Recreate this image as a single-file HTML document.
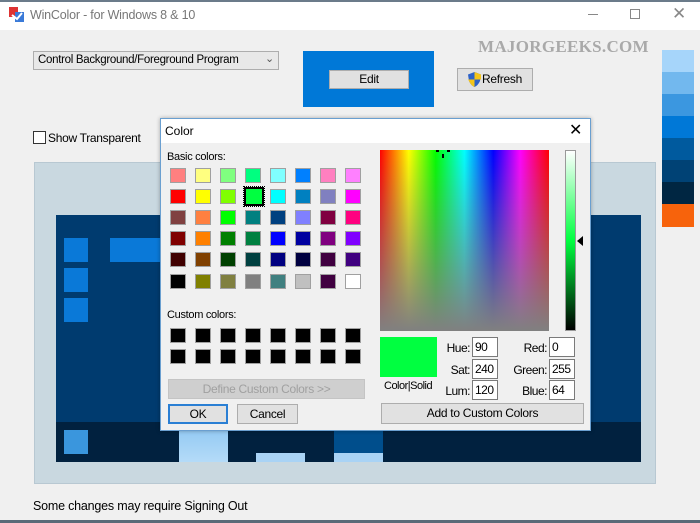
<!DOCTYPE html>
<html><head><meta charset="utf-8"><style>
*{margin:0;padding:0;box-sizing:border-box}
body{width:700px;height:523px;overflow:hidden;background:#f0f0f0;font-family:"Liberation Sans",sans-serif;font-size:12px;color:#000;position:relative}
.a{position:absolute}
.sw{position:absolute;width:16px;height:15px;border:1px solid #a0a0a0}
.inp{position:absolute;background:#fff;border:1px solid #7a7a7a;width:26px;height:20px;font-size:12px;padding:2px 2px;letter-spacing:-0.5px}
.lbl{position:absolute;font-size:12px;text-align:right;letter-spacing:-0.5px}
.btn{position:absolute;background:#e1e1e1;border:1px solid #adadad;text-align:center;font-size:12px;letter-spacing:-0.3px}
</style></head><body>
<div class="a" style="left:0;top:0;width:700px;height:2px;background:#6b7b8a"></div>
<div class="a" style="left:0;top:2px;width:700px;height:28px;background:#fff"></div>
<svg class="a" style="left:9px;top:7px" width="16" height="16"><rect x="0" y="0" width="9" height="10" fill="#d33"/><rect x="6" y="5" width="9" height="10" fill="#3a7ad8"/><path d="M3 8 L8 12 L13 6" stroke="#fff" stroke-width="2" fill="none"/></svg>
<div class="a" style="left:30px;top:8px;font-size:12.5px;color:#777;letter-spacing:-0.2px">WinColor - for Windows 8 &amp; 10</div>
<div class="a" style="left:588px;top:14px;width:10px;height:1px;background:#888"></div>
<div class="a" style="left:630px;top:9px;width:10px;height:10px;border:1px solid #888"></div>
<div class="a" style="left:672px;top:4px;font-size:17px;color:#888">✕</div>

<div class="a" style="left:33px;top:51px;width:246px;height:19px;border:1px solid #adadad;background:#e8e8e8;padding:2px 4px;font-size:11.5px;letter-spacing:-0.3px">Control Background/Foreground Program</div>
<div class="a" style="left:265px;top:52px;font-size:11px;color:#555">⌄</div>
<div class="a" style="left:303px;top:51px;width:131px;height:56px;background:#0078d7"></div>
<div class="btn" style="left:329px;top:70px;width:80px;height:19px;line-height:17px">Edit</div>
<div class="btn" style="left:457px;top:68px;width:76px;height:23px;line-height:21px;padding-left:14px">Refresh</div>
<svg class="a" style="left:467px;top:71px" width="15" height="17"><path d="M7.5 1 L14 3.5 L13 10 Q11 14.5 7.5 16 Q4 14.5 2 10 L1 3.5 Z" fill="#2d62c8"/><path d="M7.5 1 L14 3.5 L14 8.5 L7.5 8.5 Z" fill="#f5c518"/><path d="M1 8.5 L7.5 8.5 L7.5 16 Q4 14.5 2 10 Z" fill="#f5c518"/></svg>
<div class="a" style="left:478px;top:37px;font-family:'Liberation Serif',serif;font-weight:bold;font-size:17px;color:#a9a9a9;letter-spacing:0.3px">MAJORGEEKS.COM</div>

<div class="a" style="left:662px;top:50px;width:32px;height:22px;background:#a6d5fa"></div>
<div class="a" style="left:662px;top:72px;width:32px;height:22px;background:#72b8ee"></div>
<div class="a" style="left:662px;top:94px;width:32px;height:22px;background:#3b97e0"></div>
<div class="a" style="left:662px;top:116px;width:32px;height:22px;background:#0078d7"></div>
<div class="a" style="left:662px;top:138px;width:32px;height:22px;background:#005a9e"></div>
<div class="a" style="left:662px;top:160px;width:32px;height:22px;background:#004275"></div>
<div class="a" style="left:662px;top:182px;width:32px;height:22px;background:#002642"></div>
<div class="a" style="left:662px;top:204px;width:32px;height:23px;background:#f7630c"></div>

<div class="a" style="left:33px;top:131px;width:13px;height:13px;border:1px solid #333;background:#fff"></div>
<div class="a" style="left:48px;top:131px;font-size:12px;letter-spacing:-0.3px">Show Transparent</div>

<div class="a" style="left:34px;top:162px;width:622px;height:322px;background:#c9d8e0;border:1px solid #b8c8d2"></div>
<div class="a" style="left:56px;top:215px;width:585px;height:207px;background:#003b6f"></div>
<div class="a" style="left:64px;top:238px;width:24px;height:24px;background:#0a79d8"></div>
<div class="a" style="left:64px;top:268px;width:24px;height:24px;background:#0a79d8"></div>
<div class="a" style="left:64px;top:298px;width:24px;height:24px;background:#0a79d8"></div>
<div class="a" style="left:110px;top:238px;width:60px;height:24px;background:#0a79d8"></div>
<div class="a" style="left:56px;top:422px;width:585px;height:40px;background:#01213f"></div>
<div class="a" style="left:64px;top:430px;width:24px;height:24px;background:#3a96dd"></div>
<div class="a" style="left:179px;top:422px;width:49px;height:40px;background:linear-gradient(#8cc6f2,#b4dbf8)"></div>
<div class="a" style="left:256px;top:453px;width:49px;height:9px;background:#a9d3f5"></div>
<div class="a" style="left:334px;top:422px;width:49px;height:31px;background:#004e8c"></div>
<div class="a" style="left:334px;top:453px;width:49px;height:9px;background:#a9d3f5"></div>

<div class="a" style="left:33px;top:499px;font-size:12.5px;letter-spacing:-0.2px">Some changes may require Signing Out</div>
<div class="a" style="left:0;top:520px;width:700px;height:3px;background:#5a6a78"></div>

<!-- dialog -->
<div class="a" style="left:160px;top:118px;width:431px;height:313px;background:#f0f0f0;border:1px solid #6a9fd0;box-shadow:0 0 4px rgba(0,0,0,.3)"></div>
<div class="a" style="left:161px;top:119px;width:429px;height:24px;background:#fff"></div>
<div class="a" style="left:165px;top:124px;font-size:12px">Color</div>
<div class="a" style="left:569px;top:120px;font-size:16px">✕</div>
<div class="a" style="left:167px;top:151px;font-size:11px;letter-spacing:-0.3px">Basic colors:</div>
<div class="a" style="left:167px;top:309px;font-size:11px;letter-spacing:-0.3px">Custom colors:</div>
<div id="g"></div>
<div class="btn" style="left:168px;top:379px;width:197px;height:20px;line-height:18px;color:#a0a0a0;background:#cfcfcf;border-color:#c4c4c4">Define Custom Colors &gt;&gt;</div>
<div class="btn" style="left:168px;top:404px;width:60px;height:20px;line-height:17px;border:2px solid #2a7fd4">OK</div>
<div class="btn" style="left:237px;top:404px;width:61px;height:20px;line-height:18px">Cancel</div>

<div class="a" style="left:380px;top:150px;width:169px;height:181px;background:linear-gradient(to bottom,rgba(128,128,128,0),rgba(128,128,128,1)),linear-gradient(to right,#f00,#ff0 17%,#0f0 33%,#0ff 50%,#00f 67%,#f0f 83%,#f00)"></div>
<div class="a" style="left:436px;top:150px;width:3px;height:2px;background:#000"></div>
<div class="a" style="left:447px;top:150px;width:3px;height:2px;background:#000"></div>
<div class="a" style="left:442px;top:154px;width:2px;height:4px;background:#000"></div>
<div class="a" style="left:565px;top:150px;width:11px;height:181px;border:1px solid #999;background:linear-gradient(#fff,#00ff40 50%,#000)"></div>
<div class="a" style="left:577px;top:236px;width:0;height:0;border-top:5px solid transparent;border-bottom:5px solid transparent;border-right:6px solid #000"></div>

<div class="a" style="left:380px;top:337px;width:57px;height:40px;background:#00ff40"></div>
<div class="a" style="left:384px;top:380px;font-size:11px;letter-spacing:-0.5px">Color|Solid</div>
<div class="lbl" style="left:440px;top:341px;width:30px">Hue:</div>
<div class="lbl" style="left:440px;top:363px;width:30px">Sat:</div>
<div class="lbl" style="left:440px;top:384px;width:30px">Lum:</div>
<div class="inp" style="left:472px;top:337px">90</div>
<div class="inp" style="left:472px;top:359px">240</div>
<div class="inp" style="left:472px;top:380px">120</div>
<div class="lbl" style="left:505px;top:341px;width:42px">Red:</div>
<div class="lbl" style="left:505px;top:363px;width:42px">Green:</div>
<div class="lbl" style="left:505px;top:384px;width:42px">Blue:</div>
<div class="inp" style="left:549px;top:337px">0</div>
<div class="inp" style="left:549px;top:359px">255</div>
<div class="inp" style="left:549px;top:380px">64</div>
<div class="btn" style="left:381px;top:403px;width:203px;height:21px;line-height:19px">Add to Custom Colors</div>

<script>
var c=[["#ff8080","#ffff80","#80ff80","#00ff80","#80ffff","#0080ff","#ff80c0","#ff80ff"],
["#ff0000","#ffff00","#80ff00","#00ff40","#00ffff","#0080c0","#8080c0","#ff00ff"],
["#804040","#ff8040","#00ff00","#008080","#004080","#8080ff","#800040","#ff0080"],
["#800000","#ff8000","#008000","#008040","#0000ff","#0000a0","#800080","#8000ff"],
["#400000","#804000","#004000","#004040","#000080","#000040","#400040","#400080"],
["#000000","#808000","#808040","#808080","#408080","#c0c0c0","#400040","#ffffff"]];
var h="",ys=[168,189,210,231,252,274];
for(var r=0;r<6;r++)for(var k=0;k<8;k++)h+='<div class="sw" style="left:'+(170+k*25)+'px;top:'+ys[r]+'px;background:'+c[r][k]+'"></div>';
for(var r=0;r<2;r++)for(var k=0;k<8;k++)h+='<div class="sw" style="left:'+(170+k*25)+'px;top:'+(328+r*21)+'px;background:#000"></div>';
h+='<div class="a" style="left:243px;top:186px;width:22px;height:21px;border:1px dotted #000"></div><div class="a" style="left:244px;top:187px;width:20px;height:19px;border:2px solid #000"></div><div class="a" style="left:246px;top:189px;width:16px;height:15px;background:#00ff40"></div>';
document.getElementById("g").outerHTML=h;
</script>
</body></html>
